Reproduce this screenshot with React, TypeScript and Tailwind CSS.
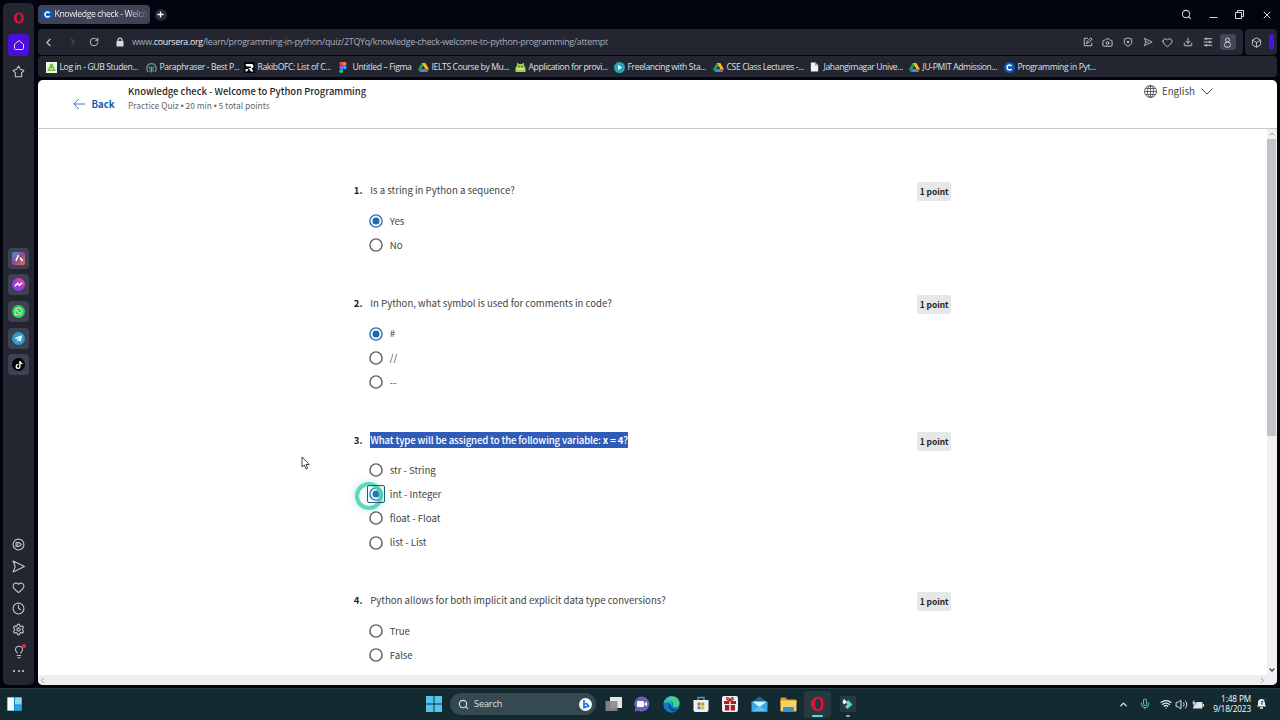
import type { ReactNode } from 'react';
import {
  Box,
  Camera,
  ChevronDown,
  ChevronLeft,
  ChevronRight,
  ChevronUp,
  Clock,
  Download,
  Heart,
  Lightbulb,
  Mic,
  RotateCw,
  Search,
  Settings,
  Volume2,
  Wifi,
  X,
} from 'lucide-react';
import { FaTiktok, FaWhatsapp } from 'react-icons/fa';

const OperaLogo = ({ size }: { size: number }) => (
  <svg width={size} height={size} viewBox="0 0 24 24">
    <path
      fillRule="evenodd"
      fill="#d3173a"
      d="M12 1C5.600 1 1.500 6 1.500 12s4.100 11 10.500 11 10.500-5 10.500-11S18.400 1 12 1Zm0 3.200c2.900 0 4.500 3.600 4.500 7.800s-1.600 7.800-4.500 7.800S7.500 16.200 7.500 12 9.100 4.200 12 4.200Z"
    />
    <path fill="#9c1129" d="M14 1.300C19.500 2 22.500 6.600 22.500 12s-3 10-8.500 10.700c4-1.500 6-5.500 6-10.700S18 2.800 14 1.300Z" />
  </svg>
);

const CourseraIcon = () => (
  <svg width="11" height="11" viewBox="0 0 22 22">
    <circle cx="11" cy="11" r="11" fill="#0f56b8" />
    <path d="M15.200 8.200A5 5 0 1 0 15.200 13.800" fill="none" stroke="#fff" strokeWidth="3" />
  </svg>
);

const DriveIcon = () => (
  <svg width="11" height="11" viewBox="0 0 24 24">
    <path d="M8 2h8l8 14h-8Z" fill="#f8bd12" />
    <path d="M8 2l4 7L4 22 0 16Z" fill="#1f9d58" />
    <path d="M8 15.500h16L20 22H4Z" fill="#4486f4" />
    <path d="M16 15.500h8L20 22Z" fill="#e04a3b" />
    <path d="M12 9l3.700 6.500H8.300Z" fill="#232631" />
  </svg>
);

const GubIcon = () => (
  <svg width="11" height="11" viewBox="0 0 22 22">
    <rect width="22" height="22" fill="#eef7e6" />
    <path d="M3 18h16v-3l-3-2 1-3-3-1 1-4-4-2-4 2 1 4-3 1 1 3-3 2Z" fill="#78c23c" />
    <path d="M8 14h6" stroke="#fff" strokeWidth="2" />
  </svg>
);

const ParaphraserIcon = () => (
  <svg width="11" height="11" viewBox="0 0 22 22" fill="none" stroke="#5d9f93" strokeWidth="2.500">
    <path d="M4 20C-1 12 3 3 11 3s12 9 7 17" />
    <path d="M8 20V10M11 9v12M14 10v10M5 12l3-3M17 12l-3-3" strokeWidth="2" />
  </svg>
);

const RakibIcon = () => (
  <svg width="11" height="11" viewBox="0 0 22 22">
    <rect width="22" height="22" fill="#05060a" />
    <path d="M3 4h12q4 0 4 4t-4 5l4 6h-5l-5-7h5q1-3-1-3H5ZM3 14h6l-3 5H3Z" fill="#fff" />
  </svg>
);

const FigmaIcon = () => (
  <svg width="8" height="11" viewBox="0 0 16 24">
    <path d="M4 0h4v8H4a4 4 0 0 1 0-8Z" fill="#f24e1e" />
    <path d="M8 0h4a4 4 0 0 1 0 8H8Z" fill="#ff7262" />
    <path d="M4 8h4v8H4a4 4 0 0 1 0-8Z" fill="#a259ff" />
    <circle cx="12" cy="12" r="4" fill="#1abcfe" />
    <path d="M4 16h4v4a4 4 0 1 1-4-4Z" fill="#0acf83" />
  </svg>
);

const AndroidIcon = () => (
  <svg width="11" height="11" viewBox="0 0 22 22">
    <path d="M1 20V11l3-4V1l4 3h6l4-3v6l3 4v9Z" fill="#a5ce4b" />
    <circle cx="8" cy="9" r="1.500" fill="#2d4a18" />
    <circle cx="14" cy="9" r="1.500" fill="#2d4a18" />
    <path d="M3 14h16" stroke="#e3f3b9" strokeWidth="2" />
  </svg>
);

const PlayIcon = () => (
  <svg width="11" height="11" viewBox="0 0 22 22">
    <circle cx="11" cy="11" r="11" fill="#27a5c0" />
    <path d="M8 6l8 5-8 5Z" fill="#fff" />
  </svg>
);

const FileIcon = () => (
  <svg width="9" height="10" viewBox="0 0 18 22">
    <path d="M1 1h10l6 6v14H1Z" fill="#f1f2f5" />
    <path d="M11 1v6h6" fill="none" stroke="#6c707c" strokeWidth="1.500" />
  </svg>
);

const bookmarks = [
  { icon: <GubIcon />, label: 'Log in - GUB Studen...', slot: 'w-[100px]' },
  { icon: <ParaphraserIcon />, label: 'Paraphraser - Best P...', slot: 'w-[98px]' },
  { icon: <RakibIcon />, label: 'RakibOFC: List of C...', slot: 'w-[95px]' },
  { icon: <FigmaIcon />, label: 'Untitled – Figma', slot: 'w-[79px]' },
  { icon: <DriveIcon />, label: 'IELTS Course by Mu...', slot: 'w-[97px]' },
  { icon: <AndroidIcon />, label: 'Application for provi...', slot: 'w-[99px]' },
  { icon: <PlayIcon />, label: 'Freelancing with Sta...', slot: 'w-[99px]' },
  { icon: <DriveIcon />, label: 'CSE Class Lectures -...', slot: 'w-[97px]' },
  { icon: <FileIcon />, label: 'Jahangirnagar Unive...', slot: 'w-[99px]' },
  { icon: <DriveIcon />, label: 'JU-PMIT Admission...', slot: 'w-[95px]' },
  { icon: <CourseraIcon />, label: 'Programming in Pyt...', slot: 'w-[100px]' },
];

const questions = [
  { text: 'Is a string in Python a sequence?', options: ['Yes', 'No'], answer: 0 },
  { text: 'In Python, what symbol is used for comments in code?', options: ['#', '//', '--'], answer: 0 },
  {
    text: 'What type will be assigned to the following variable:',
    code: 'x = 4',
    options: ['str - String', 'int - Integer', 'float - Float', 'list - List'],
    answer: 1,
    active: true,
  },
  {
    text: 'Python allows for both implicit and explicit data type conversions?',
    options: ['True', 'False'],
    answer: -1,
  },
];

const SendIcon = ({ size }: { size: number }) => (
  <svg width={size} height={size} viewBox="0 0 24 24" fill="none" stroke="currentColor" strokeWidth="2" strokeLinejoin="round">
    <path d="M3 3l19 9-19 9 4-9Z" />
    <path d="M7 12h6" />
  </svg>
);

const sidebarTools = [
  <svg key="play" width="13" height="13" viewBox="0 0 24 24" fill="none" stroke="currentColor" strokeWidth="2">
    <circle cx="12" cy="12" r="10" />
    <path d="M7.500 8.500h5l5 3.500-5 3.500h-5Z" />
    <path d="M10.500 10.500v3" />
  </svg>,
  <svg key="send" width="13" height="13" viewBox="0 0 24 24" fill="none" stroke="currentColor" strokeWidth="2" strokeLinejoin="round">
    <path d="M2 2l21 10L2 22l4-10Z" />
  </svg>,
  <Heart key="heart" size={13} strokeWidth={2} />,
  <Clock key="clock" size={13} strokeWidth={2} />,
  <Settings key="settings" size={13} strokeWidth={2} />,
];

const toolbarIcons = [
  <svg key="edit" width="10" height="10" viewBox="0 0 24 24" fill="none" stroke="currentColor" strokeWidth="2.200">
    <path d="M12 3H3v18h18v-7" />
    <path d="M8 16l2-6L19 2l3 3-8 8Z" />
  </svg>,
  <Camera key="camera" size={11} strokeWidth={2.1} />,
  <svg key="shield" width="10" height="10" viewBox="0 0 24 24" fill="none" stroke="currentColor" strokeWidth="2.200">
    <path d="M12 2l9 3v8c0 4-4 7-9 9-5-2-9-5-9-9V5Z" />
    <path d="M9 9l6 6M15 9l-6 6" />
  </svg>,
  <SendIcon key="send" size={10} />,
  <Heart key="heart" size={11} strokeWidth={2.1} />,
  <Download key="download" size={10} strokeWidth={2.3} />,
  <svg key="sliders" width="10" height="10" viewBox="0 0 24 24" fill="none" stroke="currentColor" strokeWidth="2.500">
    <path d="M2 4h20M2 12h20M2 20h20M8 1v6M16 9v6M8 17v6" />
  </svg>,
];

const AppTile = ({ children }: { children: ReactNode }) => (
  <div className="flex h-[21px] w-[21px] items-center justify-center rounded-[4px] bg-[#3d4152]">{children}</div>
);

const Sidebar = () => (
  <aside className="mt-[3px] ml-[3px] flex h-[682px] w-[31px] shrink-0 flex-col items-center rounded-[5px] bg-[#232631] text-[#c3c6d0]">
    <div className="mt-[9px]">
      <OperaLogo size={12} />
    </div>
    <div className="mt-[10px] flex h-[22px] w-[21px] items-center justify-center rounded-[4px] bg-[#4a0fdc] text-[#e6ddff]">
      <svg width="12" height="12" viewBox="0 0 24 24" fill="none" stroke="currentColor" strokeWidth="2" strokeLinejoin="round">
        <path d="M3 11l9-8 9 8v8q0 2-2 2H5q-2 0-2-2Z" />
      </svg>
    </div>
    <svg className="mt-[9px]" width="13" height="13" viewBox="0 0 24 24" fill="none" stroke="currentColor" strokeWidth="1.900" strokeLinejoin="round">
      <path d="M12 2l3.500 6 6.500 2-4.500 5 .5 6.500H6L6.500 15 2 10l6.500-2Z" />
    </svg>
    <div className="mt-[169.500px] flex flex-col gap-[5.700px]">
      <AppTile>
        <div className="flex h-[13px] w-[13px] items-center justify-center rounded-[2px] bg-linear-to-br from-[#3a8fd0] via-[#8a4a8c] to-[#e8713c]">
          <svg width="10" height="10" viewBox="0 0 20 20" stroke="#fff" strokeWidth="3.200" fill="none">
            <path d="M4 16l5-12M12 9l5 7" />
          </svg>
        </div>
      </AppTile>
      <AppTile>
        <div className="flex h-[13px] w-[13px] items-center justify-center rounded-full bg-linear-to-tr from-[#5a4bff] via-[#b02fd6] to-[#f4527f]">
          <svg width="9" height="9" viewBox="0 0 20 20" stroke="#fff" strokeWidth="3.500" fill="none">
            <path d="M2 14l6-7 4 5 6-6" />
          </svg>
        </div>
      </AppTile>
      <AppTile>
        <div className="flex h-[13px] w-[13px] items-center justify-center rounded-full bg-[#2fcf58] text-white">
          <FaWhatsapp size={9} />
        </div>
      </AppTile>
      <AppTile>
        <div className="flex h-[13px] w-[13px] items-center justify-center rounded-full bg-[#2f9cc9]">
          <svg width="9" height="9" viewBox="0 0 20 20">
            <path d="M1 9l17-6-3 14-5-3-3 3v-5l7-6-9 5Z" fill="#fff" />
          </svg>
        </div>
      </AppTile>
      <AppTile>
        <div className="flex h-[13px] w-[13px] items-center justify-center rounded-full bg-black text-white">
          <FaTiktok size={8} />
        </div>
      </AppTile>
    </div>
    <div className="mt-auto mb-[10px] flex flex-col items-center gap-[8.300px]">
      {sidebarTools}
      <div className="relative">
        <Lightbulb size={14} strokeWidth={1.8} />
        <span className="absolute -top-px right-0 h-1 w-1 rounded-full bg-[#e0303f]" />
      </div>
      <div className="flex h-[8px] items-center gap-[2.500px]">
        <span className="h-[2px] w-[2px] rounded-full bg-[#d7d9e0]" />
        <span className="h-[2px] w-[2px] rounded-full bg-[#d7d9e0]" />
        <span className="h-[2px] w-[2px] rounded-full bg-[#d7d9e0]" />
      </div>
    </div>
  </aside>
);

const TabStrip = () => (
  <div className="flex h-[29px] items-center">
    <div className="flex h-[19px] w-[112px] items-center gap-[2px] rounded-[4px] bg-[#3f4357] pl-1 text-[8.700px] whitespace-nowrap">
      <div className="shrink-0">
        <CourseraIcon />
      </div>
      <span className="bg-linear-to-r from-white from-80% to-[#5a5e70] bg-clip-text tracking-[-0.400px] text-transparent">
        Knowledge check - Welco
      </span>
    </div>
    <div className="ml-[5px] flex h-3 w-3 items-center justify-center rounded-full bg-[#272a36]">
      <svg width="7" height="7" viewBox="0 0 8 8" stroke="#fff" strokeWidth="1.500">
        <path d="M4 0.500v7M0.500 4h7" />
      </svg>
    </div>
    <div className="mr-[4px] ml-auto flex w-[92px] items-center justify-between text-[#d5d7dd]">
      <Search size={11} strokeWidth={2.2} />
      <svg width="9" height="11" viewBox="0 0 9 11" stroke="currentColor">
        <path d="M0.500 8.500h8" />
      </svg>
      <svg width="9" height="9" viewBox="0 0 9 9" fill="none" stroke="currentColor">
        <path d="M0.500 2.500h6v6h-6ZM2.500 2.500v-2h6v6h-2" />
      </svg>
      <X size={12} strokeWidth={2} />
    </div>
  </div>
);

const AddressBar = () => (
  <div className="flex h-[26px] gap-[2px]">
    <div className="flex w-[1205px] items-center rounded-[4px] bg-[#232631] text-[#c7cad3]">
      <ChevronLeft className="ml-[4px]" size={13} strokeWidth={2} />
      <ChevronRight className="ml-[12px] text-[#5b5f6e]" size={12} strokeWidth={2} />
      <RotateCw className="ml-[10px]" size={10} strokeWidth={2.2} />
      <svg className="ml-[17px]" width="8" height="10" viewBox="0 0 16 20">
        <path d="M4 9V6a4 4 0 0 1 8 0v3" fill="none" stroke="currentColor" strokeWidth="2.500" />
        <rect x="1" y="8" width="14" height="11" rx="1" fill="#d5d7de" />
      </svg>
      <span className="ml-[8.500px] text-[8.900px] tracking-[-0.288px] whitespace-nowrap text-[#a9adba]">
        www.<span className="text-[#eceef3]">coursera.org</span>
        /learn/programming-in-python/quiz/2TQYq/knowledge-check-welcome-to-python-programming/attempt
      </span>
      <div className="mr-[7px] ml-auto flex">
        {toolbarIcons.map((icon, index) => (
          <div key={index} className="flex h-4 w-5 items-center justify-center">
            {icon}
          </div>
        ))}
        <div className="ml-[2px] flex h-4 w-4 items-center justify-center rounded-[3px] bg-[#414659]">
          <svg width="9" height="11" viewBox="0 0 18 22" fill="none" stroke="currentColor" strokeWidth="2">
            <circle cx="9" cy="6" r="4" />
            <path d="M3 15a6 5 0 0 1 12 0v2q0 3-3 3H6q-3 0-3-3Z" />
          </svg>
        </div>
      </div>
    </div>
    <div className="flex w-[32px] items-center justify-between rounded-[4px] bg-[#232631] pr-[3px] pl-[6px] text-[#c7cad3]">
      <Box size={11} strokeWidth={2} />
      <span className="h-4 w-[5px] rounded-[2px] bg-[#4a14e0]" />
    </div>
  </div>
);

const BookmarksBar = () => (
  <div className="mt-[1px] flex h-[21px] items-center rounded-[4px] bg-[#232631] pt-[2px] pl-[8px] text-[8.600px] text-[#dfe1e7]">
    {bookmarks.map((bookmark) => (
      <div key={bookmark.label} className={`flex shrink-0 items-center whitespace-nowrap ${bookmark.slot}`}>
        <span className="w-[14px] shrink-0">{bookmark.icon}</span>
        <span className="tracking-[-0.370px]">{bookmark.label}</span>
      </div>
    ))}
  </div>
);

const Radio = ({ checked }: { checked: boolean }) => (
  <svg className="block shrink-0" width="14" height="14" viewBox="0 0 14 14" fill="none">
    <circle cx="7" cy="7" r="6.100" stroke={checked ? '#2a6fb5' : '#606060'} strokeWidth="1.400" />
    {checked && <circle cx="7" cy="7" r="3.500" fill="#1f68b3" />}
  </svg>
);

const ClickRipple = () => (
  <>
    <span className="absolute top-[-5px] left-[-14px] h-[28px] w-[28px] rounded-full border-4 border-[#45cfac]/85 bg-[#7ce8dc]/10 shadow-[0_0_5px_2px_rgba(150,240,225,0.5)]" />
    <span className="absolute top-[-2px] left-[-2px] h-[18px] w-[18px] rounded-[2px] border border-[#2a5a70]" />
  </>
);

const Quiz = () => (
  <main className="flex h-[546px] flex-col gap-[33.700px] overflow-hidden pt-[49.300px] pl-[310.300px] font-['Noto_Sans_CJK_SC','Noto_Sans_CJK_JP',sans-serif] text-[#404345]">
    {questions.map((question, number) => (
      <section key={question.text} className="flex w-[603.400px] shrink-0 text-[9.600px]">
        <div className="w-[21.500px] shrink-0 pl-[6px] leading-6 font-bold text-[#1f1f1f]">{number + 1}.</div>
        <div className="flex-1">
          <div className="pl-px leading-6 whitespace-nowrap">
            {question.active ? (
              <span className="inline-block h-4 bg-[#2f5cb8] leading-4 font-medium tracking-[-0.130px] text-white">
                {question.text} <b>{question.code}</b>?
              </span>
            ) : (
              question.text
            )}
          </div>
          <div className="mt-[6.700px]">
            {question.options.map((option, index) => (
              <div key={option} className="flex h-[24.100px] items-center gap-[6.500px]">
                <div className="relative">
                  <Radio checked={index === question.answer} />
                  {question.active && index === question.answer && <ClickRipple />}
                </div>
                <span>{option}</span>
              </div>
            ))}
          </div>
        </div>
        <div className="mt-[4px] flex h-[19px] w-[34px] items-center justify-center rounded-[2px] bg-[#e5e7e8] text-[8.400px] font-bold whitespace-nowrap text-[#1f1f1f]">
          1 point
        </div>
      </section>
    ))}
  </main>
);

const QuizHeader = () => (
  <header className="flex h-[49px] shrink-0 border-b border-[#c8c8c8] font-['Noto_Sans_CJK_SC','Noto_Sans_CJK_JP',sans-serif] text-[#404345]">
    <div className="mt-[15px] ml-[35px] flex h-[18px] w-[55.500px] items-center text-[9.600px] font-bold text-[#1259b0]">
      <svg width="12" height="12" viewBox="0 0 12 12" fill="none" stroke="#3b78bd">
        <path d="M12 6H1M6 0.800L0.800 6 6 11.200" />
      </svg>
      <span className="ml-[7px]">Back</span>
    </div>
    <div className="mt-[4px] whitespace-nowrap">
      <h1 className="text-[9.450px] leading-[15px] font-medium text-[#1f1f1f]">
        Knowledge check - Welcome to Python Programming
      </h1>
      <p className="text-[8.400px] leading-[12px] text-[#666]">
        Practice Quiz <span className="font-['Liberation_Sans',sans-serif]">•</span> 20 min{' '}
        <span className="font-['Liberation_Sans',sans-serif]">•</span> 5 total points
      </p>
    </div>
    <div className="mt-[2px] mr-[63.500px] ml-auto flex h-[18px] items-center text-[9.700px]">
      <svg width="13" height="13" viewBox="0 0 26 26" fill="none" stroke="#4a4a4a" strokeWidth="1.700">
        <circle cx="13" cy="13" r="12" />
        <ellipse cx="13" cy="13" rx="6" ry="12" />
        <path d="M13 1v24M1 13h24M3 7h20M3 19h20" />
      </svg>
      <span className="ml-[5px] w-[33px]">English</span>
      <svg className="ml-[6px]" width="12" height="7" viewBox="0 0 12 7" fill="none" stroke="#444">
        <path d="M0.500 0.500L6 6l5.500-5.500" />
      </svg>
    </div>
  </header>
);

const Page = () => (
  <div className="relative mt-[3px] flex h-[605px] w-[1239px] flex-col overflow-hidden rounded-[5px] bg-white">
    <QuizHeader />
    <div className="flex h-[546px]">
      <div className="flex-1 overflow-hidden">
        <Quiz />
      </div>
      <div className="flex w-[10px] flex-col items-center bg-[#f0f0f1] text-[#777]">
        <ChevronUp size={8} strokeWidth={3} className="my-px text-[#999]" />
        <div className="h-[297px] w-[9px] bg-[#c3c3c5]" />
        <ChevronDown size={8} strokeWidth={4} className="mt-auto mb-px text-[#444]" />
      </div>
    </div>
    <div className="flex h-[10px] items-center justify-between bg-[#efefef] pr-[10px] text-[#999]">
      <ChevronLeft size={9} strokeWidth={2.5} />
      <ChevronRight size={9} strokeWidth={2.5} />
    </div>
    <svg className="absolute top-[376px] left-[263px]" width="10" height="14" viewBox="0 0 10 14">
      <path d="M1 1v10l2.300-2 1.700 4 1.700-.8L5 8.500h3.300Z" fill="#fff" stroke="#333" strokeWidth="0.900" />
    </svg>
  </div>
);

const WindowsIcon = () => (
  <svg width="16" height="16" viewBox="0 0 16 16" fill="#54c6ee">
    <path d="M0 0h7.500v7.500H0ZM8.500 0H16v7.500H8.500ZM0 8.500h7.500V16H0ZM8.500 8.500H16V16H8.500Z" />
  </svg>
);

const taskbarApps = [
  {
    name: 'task-view',
    icon: (
      <svg width="17" height="16" viewBox="0 0 17 16">
        <rect x="5" y="1" width="12" height="11" fill="#e6e6e6" />
        <rect x="0.500" y="5" width="12" height="10" fill="#8b8b8b" fillOpacity="0.900" />
      </svg>
    ),
  },
  {
    name: 'chat',
    icon: (
      <svg width="16" height="16" viewBox="0 0 16 16">
        <path d="M8 .5a7.500 7.500 0 1 1-3.500 14.200L.8 15.500 1.500 12A7.500 7.500 0 0 1 8 .5Z" fill="#6660b8" />
        <rect x="3" y="5" width="7" height="6" rx="1.200" fill="#fff" />
        <path d="M10.500 7.500L13 5.500v5l-2.500-2Z" fill="#fff" />
      </svg>
    ),
  },
  {
    name: 'edge',
    icon: (
      <svg width="17" height="17" viewBox="0 0 24 24">
        <circle cx="12" cy="12" r="11.500" fill="#1577c9" />
        <path d="M1 11C2 4 7 .5 12.500.5 19 .5 23.500 5 23.500 10c0 4-3 6-6 6-2.500 0-4-1-3.500-2.500 1.500-3.500-1-6-4.500-6C5.500 7.500 2 9 1 11Z" fill="#45cf87" />
        <path d="M1 11C2 4 7 .5 12.500.5 8 3 5 5 1 11Z" fill="#2fb3d8" />
        <path d="M9.500 9c-3 3-2 9 3 12 3 1.500 7 0 9-3-5 2-12 0-12-9Z" fill="#0d4d93" />
        <path d="M1 11c1.500-3 7-4 10-2.500 1.500 1 2 3 1.500 4.500C9 8 4 8 1 11Z" fill="#3fc0e0" />
      </svg>
    ),
  },
  {
    name: 'store',
    icon: (
      <svg width="16" height="17" viewBox="0 0 16 17">
        <path d="M5 4V1.500h6V4" fill="none" stroke="#3ba4dc" strokeWidth="1.300" />
        <path d="M.5 4h15v10q0 2-2 2h-11q-2 0-2-2Z" fill="#eef0f1" />
        <path d="M4.500 6.500h3v3h-3Z" fill="#e8562c" />
        <path d="M8.300 6.500h3v3h-3Z" fill="#7cb82f" />
        <path d="M4.500 10.300h3v3h-3Z" fill="#2b9ce0" />
        <path d="M8.300 10.300h3v3h-3Z" fill="#f4b51e" />
      </svg>
    ),
  },
  {
    name: 'gift',
    icon: (
      <svg width="16" height="16" viewBox="0 0 16 16">
        <rect width="16" height="16" rx="2" fill="#f5efef" />
        <path d="M2 5h5.300v3H2ZM8.700 5H14v3H8.700ZM3 9h4.300v5.500H3ZM8.700 9H13v5.500H8.700Z" fill="#a3202b" />
        <path d="M8 4.500C4 4.500 4 1.500 5.500 1.500S8 4.500 8 4.500s1-3 2.500-3S12 4.500 8 4.500Z" fill="none" stroke="#a3202b" strokeWidth="1.200" />
      </svg>
    ),
  },
  {
    name: 'mail',
    icon: (
      <svg width="17" height="16" viewBox="0 0 17 16">
        <path d="M.5 6l8-5.500 8 5.500v2H.5Z" fill="#1367a8" />
        <path d="M.5 6h16v9.500H.5Z" fill="#39a9e4" />
        <path d="M1.500 5.500h14l-7 5.500Z" fill="#e7f4fb" />
        <path d="M.5 15.500l8-5.500 8 5.500Z" fill="#5cc2f1" />
      </svg>
    ),
  },
  {
    name: 'files',
    icon: (
      <svg width="17" height="15" viewBox="0 0 17 15">
        <path d="M.5 1.500q0-1 1-1h4l2 2h8q1 0 1 1V6H.5Z" fill="#d99b1c" />
        <rect x="0.500" y="3.500" width="16" height="11" rx="0.800" fill="#f8d066" />
        <path d="M4 10h9q1 0 1 1v3.500H3V11q0-1 1-1Z" fill="#3d8fd1" />
      </svg>
    ),
  },
];

const SystemTray = () => (
  <div className="flex h-8 items-center text-[#e9eef0]">
    <ChevronUp size={11} strokeWidth={2.8} />
    <Mic size={12} strokeWidth={2.2} className="ml-[10px] text-[#4fb8a6]" />
    <Wifi size={12} strokeWidth={2.5} className="ml-[9px]" />
    <Volume2 size={13} strokeWidth={1.8} className="ml-[3px]" />
    <svg className="ml-[3px]" width="13" height="11" viewBox="0 0 13 11">
      <rect x="2" y="3" width="9.500" height="6.500" rx="1" fill="#dfe5e7" />
      <rect x="11.800" y="5" width="1.200" height="2.500" fill="#dfe5e7" />
      <path d="M3.500.5L.8 4.500h2L2 8l3.500-4.500h-2Z" fill="#fff" stroke="#15292f" strokeWidth="0.500" />
    </svg>
    <div className="w-[47px] text-right text-[8.200px] leading-[10.500px] tracking-[-0.100px] whitespace-nowrap text-white">
      1:48 PM
      <br />
      9/18/2023
    </div>
    <svg className="ml-[5px]" width="11" height="12" viewBox="0 0 11 12">
      <path d="M1 8.500L2 6.500V4.500a3.500 3.500 0 0 1 7 0v2l1 2Z" fill="#e9eef0" />
      <path d="M4 10h3" stroke="#e9eef0" strokeWidth="1.500" />
      <path d="M5 3.500h2L5 6h2M8 1h2.500L8 3.500h2.500" fill="none" stroke="#25444c" strokeWidth="0.800" />
    </svg>
  </div>
);

const Taskbar = () => (
  <footer className="flex h-8 items-center border-t border-[#263a40] bg-[#142a31] pb-px">
    <svg className="ml-[7px]" width="15" height="14" viewBox="0 0 15 14">
      <rect width="15" height="14" rx="1" fill="#1386c9" />
      <rect x="0.500" y="0.500" width="6.500" height="13" fill="#f2fbff" />
      <rect x="8" y="0.500" width="6.500" height="7" fill="#8bdcf7" />
      <rect x="8" y="8.500" width="6.500" height="5" fill="#27a6e2" />
    </svg>
    <div className="ml-[403.500px] flex items-center">
      <WindowsIcon />
      <div className="ml-[8.500px] flex h-[22px] w-[146px] items-center rounded-full bg-[#344a50] pr-[4px] pl-[8px] text-[#d9e0e2]">
        <Search size={11} strokeWidth={2.4} />
        <span className="ml-[5px] text-[9.200px] tracking-[-0.150px]">Search</span>
        <div className="ml-auto flex h-[13px] w-[13px] items-center justify-center rounded-full bg-[#f0f8fb]">
          <svg width="8" height="9" viewBox="0 0 8 9" fill="none" stroke="#1b75cf" strokeWidth="1.700">
            <path d="M2 0v7.500L6.500 6 5 4 3 3.500" />
          </svg>
        </div>
      </div>
      <div className="ml-[2.500px] flex">
        {taskbarApps.map((app) => (
          <div key={app.name} className="flex h-[27px] w-[29.200px] items-center justify-center">
            {app.icon}
          </div>
        ))}
        <div className="flex w-[29.200px] justify-center">
          <div className="ml-px flex h-[27px] w-[27px] flex-col items-center rounded-[3px] bg-[#243a41] pt-[5px]">
            <OperaLogo size={16} />
            <span className="mt-[3px] h-[2px] w-[11px] rounded-full bg-[#5ed8d2]" />
          </div>
        </div>
        <div className="ml-px flex w-[29.200px] flex-col items-center pt-[5px]">
          <div className="flex h-[16px] w-[16px] items-center justify-center bg-[#263943]">
            <svg width="11" height="12" viewBox="0 0 11 12">
              <path d="M2 1l3 3-3 2.500L.5 4Z" fill="#fff" />
              <path d="M6 2l4.500 4.500L5.500 11 3 8.800l2.500-2.300L4 5Z" fill="#55e0c0" />
            </svg>
          </div>
          <span className="mt-[3px] h-[2px] w-[4px] rounded-full bg-[#9aa6aa]" />
        </div>
      </div>
    </div>
    <div className="mr-[13px] ml-auto">
      <SystemTray />
    </div>
  </footer>
);

const App = () => {
  return (
    <div className="h-[720px] w-[1280px] overflow-hidden bg-[#02040f] font-['Open_Sans','Noto_Sans',sans-serif]">
      <div className="flex h-[688px]">
        <Sidebar />
        <div className="ml-[3.500px] flex w-[1239px] flex-col">
          <TabStrip />
          <AddressBar />
          <BookmarksBar />
          <Page />
        </div>
      </div>
      <Taskbar />
    </div>
  );
};

export default App;
